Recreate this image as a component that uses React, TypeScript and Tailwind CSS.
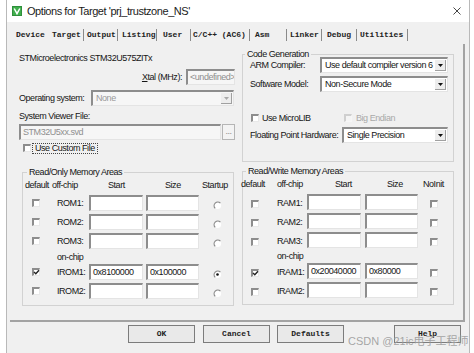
import React from 'react';

const ui = "font-['Liberation_Sans',sans-serif] text-[9px] tracking-[-0.45px] leading-none text-[#151515]";
const mono = "font-['Liberation_Mono','DejaVu_Sans_Mono',monospace] font-bold text-[8px] tracking-normal leading-none text-[#222]";
const sunken = 'border-t-2 border-l-2 border-r border-b border-t-[#8d8d8d] border-l-[#8d8d8d] border-r-[#e4e4e4] border-b-[#e4e4e4]';

const CheckBox = ({ checked = false, disabled = false }: { checked?: boolean; disabled?: boolean }) => (
  <span
    className={`relative block w-[8px] h-[8px] shrink-0 border-t-2 border-l-2 border-r border-b ${
      disabled
        ? 'bg-[#f4f4f4] border-t-[#cfcfcf] border-l-[#cfcfcf] border-r-[#f6f6f6] border-b-[#f6f6f6]'
        : 'bg-white border-t-[#8d8d8d] border-l-[#8d8d8d] border-r-[#e8e8e8] border-b-[#e8e8e8]'
    }`}
  >
    {checked && (
      <svg width="7" height="6" viewBox="0 0 7 6" className="absolute left-[-1px] top-[-1px]">
        <path d="M1 3 L2.8 4.8 L6 1.2" stroke="#222" strokeWidth="1.4" fill="none" />
      </svg>
    )}
  </span>
);

const Radio = ({ on = false }: { on?: boolean }) => (
  <svg width="9" height="9" viewBox="0 0 9 9" className="block">
    <circle cx="4.5" cy="4.5" r="3.6" fill="#fff" />
    <path d="M7.4 2.2 A3.6 3.6 0 0 0 2.2 7.4" stroke="#8a8a8a" strokeWidth="1.2" fill="none" />
    {on && <circle cx="4.5" cy="4.5" r="1.3" fill="#111" />}
  </svg>
);

const Field = ({ className = '', value = '', disabled = false }: { className?: string; value?: string; disabled?: boolean }) => (
  <div className={`h-[16px] shrink-0 flex items-center pl-[2px] whitespace-nowrap overflow-hidden ${sunken} ${disabled ? 'bg-[#f6f6f6] text-[#8f8f8f]' : 'bg-white'} ${className}`}>
    {value}
  </div>
);

const Select = ({ className = '', value, disabled = false }: { className?: string; value: string; disabled?: boolean }) => (
  <div className={`h-[16px] shrink-0 flex items-center ${sunken} ${disabled ? 'bg-[#f6f6f6] text-[#9a9a9a]' : 'bg-white'} ${className}`}>
    <span className="flex-1 pl-[3px] whitespace-nowrap overflow-hidden">{value}</span>
    <span className="w-[11px] h-[11px] mr-[1px] flex items-center justify-center bg-[#ededed] border-r border-b border-[#a0a0a0]">
      <svg width="5" height="3" viewBox="0 0 5 3">
        <path d="M0 0H5L2.5 3Z" fill={disabled ? '#a8a8a8' : '#111'} />
      </svg>
    </span>
  </div>
);

const Btn = ({ className = '', children }: { className?: string; children: React.ReactNode }) => (
  <div className={`w-[67px] h-[18px] flex items-center justify-center border border-[#7c7c7c] bg-[#e9e9e9] ${mono} ${className}`}>
    {children}
  </div>
);

const tabs = [
  { name: 'Device', cls: 'w-[39px] pl-[6px]' },
  { name: 'Target', cls: 'w-[35px] pl-[3px] border-r border-[#8a8a8a] -mt-[1px]' },
  { name: 'Output', cls: 'w-[34px] pl-[3px] border-r border-[#8a8a8a]' },
  { name: 'Listing', cls: 'w-[39px] pl-[4px] border-r border-[#8a8a8a]' },
  { name: 'User', cls: 'w-[34px] pl-[6px] border-r border-[#8a8a8a]' },
  { name: 'C/C++ (AC6)', cls: 'w-[59px] pl-[2px] border-r border-[#8a8a8a]' },
  { name: 'Asm', cls: 'w-[37px] pl-[5px] border-r border-[#8a8a8a]' },
  { name: 'Linker', cls: 'w-[35px] pl-[3px] border-r border-[#8a8a8a]' },
  { name: 'Debug', cls: 'w-[35px] pl-[5px] border-r border-[#8a8a8a]' },
  { name: 'Utilities', cls: 'w-[51px] pl-[3px] border-r border-[#8a8a8a]' },
];

type Row = { label: string; start?: string; size?: string; checked?: boolean; gap: string };

const romRows: Row[] = [
  { label: 'ROM1:', gap: 'mt-[4px]' },
  { label: 'ROM2:', gap: 'mt-[3px]' },
  { label: 'ROM3:', gap: 'mt-[3px]' },
];
const iromRows: Row[] = [
  { label: 'IROM1:', start: '0x8100000', size: '0x100000', checked: true, gap: 'mt-[1px]' },
  { label: 'IROM2:', gap: 'mt-[3px]' },
];
const ramRows: Row[] = [
  { label: 'RAM1:', gap: 'mt-[4px]' },
  { label: 'RAM2:', gap: 'mt-[3px]' },
  { label: 'RAM3:', gap: 'mt-[3px]' },
];
const iramRows: Row[] = [
  { label: 'IRAM1:', start: '0x20040000', size: '0x80000', checked: true, gap: 'mt-[1px]' },
  { label: 'IRAM2:', gap: 'mt-[3px]' },
];

const RomRow = ({ r }: { r: Row }) => (
  <div className={`h-[16px] flex items-center ${r.gap}`}>
    <div className="w-[34px] pl-[9px]">
      <CheckBox checked={r.checked} />
    </div>
    <span className="w-[32px] whitespace-nowrap">{r.label}</span>
    <Field className="w-[54px]" value={r.start} />
    <Field className="ml-[3px] w-[53px]" value={r.size} />
    <div className="w-[34px] pl-[14px] pt-[4px]">
      <Radio on={r.checked} />
    </div>
  </div>
);

const RamRow = ({ r }: { r: Row }) => (
  <div className={`h-[16px] flex items-center ${r.gap}`}>
    <div className="w-[34px] pl-[8px] pt-[3px]">
      <CheckBox checked={r.checked} />
    </div>
    <span className="w-[30px] pt-[2px] whitespace-nowrap">{r.label}</span>
    <Field className="w-[54px]" value={r.start} />
    <Field className="ml-[4px] w-[53px]" value={r.size} />
    <div className="w-[35px] pl-[12px] pt-[3px]">
      <CheckBox />
    </div>
  </div>
);

export default function App() {
  return (
    <div className={`w-[474px] h-[353px] bg-white overflow-hidden relative ${ui}`}>
      <div className="ml-[6px] w-[464px] h-full flex flex-col border-l border-r border-[#b9b9b9]">
        {/* title bar */}
        <div className="h-[22px] shrink-0 bg-white flex items-center">
          <svg width="10" height="10" viewBox="0 0 10 10" className="ml-[5px]">
            <rect width="10" height="10" fill="#2f8f3b" />
            <rect x="1" y="1" width="8" height="8" fill="#3fae4c" />
            <path d="M2.2 2.5 L5 7.6 L7.8 2.5" stroke="#fff" strokeWidth="1.5" fill="none" />
          </svg>
          <span className="ml-[5px] text-[11px] tracking-[-0.45px] text-[#1b1b1b] whitespace-nowrap">
            Options for Target 'prj_trustzone_NS'
          </span>
          <svg width="8" height="8" viewBox="0 0 8 8" className="ml-auto mr-[8px]">
            <path d="M0.5 0.5 L7.5 7.5 M7.5 0.5 L0.5 7.5" stroke="#333" strokeWidth="0.9" />
          </svg>
        </div>

        <div className="flex-1 bg-[#f0f0f0] flex flex-col">
          {/* tabs */}
          <div className="h-[22px] shrink-0 flex pl-[3px]">
            {tabs.map((t) => (
              <div key={t.name} className={`mt-[7px] h-[12px] flex items-center whitespace-nowrap ${mono} ${t.cls}`}>
                {t.name}
              </div>
            ))}
          </div>

          {/* tab page */}
          <div className="ml-[3px] w-[455px] h-[278px] shrink-0 flex border-r-2 border-b-2 border-[#a3a3a3]">
            {/* left column */}
            <div className="w-[228px] pl-[9px] flex flex-col whitespace-nowrap">
              <div className="mt-[7px] h-[14px] flex items-center">STMicroelectronics STM32U575ZITx</div>
              <div className="mt-[4px] h-[16px] flex items-center justify-end pr-[3px]">
                <span>
                  <span className="underline">X</span>tal (MHz):
                </span>
                <Field className="ml-[4px] w-[49px]" value="<undefined>" disabled />
              </div>
              <div className="mt-[5px] h-[16px] flex items-center">
                <span className="w-[72px]">Operating system:</span>
                <Select className="w-[143px]" value="None" disabled />
              </div>
              <div className="mt-[4px] h-[12px] flex items-center">System Viewer File:</div>
              <div className="mt-[2px] h-[16px] flex items-center">
                <Field className="w-[202px]" value="STM32U5xx.svd" disabled />
                <div className="ml-[1px] w-[13px] h-[16px] flex items-end justify-center pb-[3px] border border-[#b5b5b5] bg-[#f3f3f3] text-[#8a8a8a]">
                  ...
                </div>
              </div>
              <div className="mt-[1px] h-[14px] flex items-center pl-[4px]">
                <CheckBox />
                <span className="ml-[1px] h-[11px] px-[2px] flex items-center border border-dotted border-[#444]">Use Custom File</span>
              </div>

              <fieldset className="mt-[11px] ml-[3px] w-[212px] border border-[#d2d2d2] pb-[6px]">
                <legend className="ml-[4px] px-[2px] h-[12px] leading-[12px]">Read/Only Memory Areas</legend>
                <div className="mt-[1px] h-[12px] flex items-center">
                  <span className="w-[29px] pl-[2px]">default</span>
                  <span className="w-[37px]">off-chip</span>
                  <span className="w-[57px] pl-[19px]">Start</span>
                  <span className="w-[53px] pl-[19px]">Size</span>
                  <span className="pl-[3px]">Startup</span>
                </div>
                {romRows.map((r) => (
                  <RomRow key={r.label} r={r} />
                ))}
                <div className="mt-[2px] h-[12px] flex items-center pl-[34px]">on-chip</div>
                {iromRows.map((r) => (
                  <RomRow key={r.label} r={r} />
                ))}
              </fieldset>
            </div>

            {/* right column */}
            <div className="flex-1 flex flex-col whitespace-nowrap">
              <fieldset className="mt-[4px] ml-[4px] w-[212px] border border-[#d2d2d2] pb-[18px]">
                <legend className="ml-[2px] px-[2px] h-[12px] leading-[12px]">Code Generation</legend>
                <div className="-mt-[3px] h-[16px] flex items-center pl-[7px]">
                  <span className="w-[70px]">ARM Compiler:</span>
                  <Select className="w-[128px]" value="Use default compiler version 6" />
                </div>
                <div className="mt-[3px] h-[16px] flex items-center pl-[7px]">
                  <span className="w-[70px]">Software Model:</span>
                  <Select className="w-[128px]" value="Non-Secure Mode" />
                </div>
                <div className="mt-[19px] h-[14px] flex items-center pl-[8px]">
                  <div className="w-[93px] flex items-center">
                    <CheckBox />
                    <span className="ml-[3px]">Use MicroLIB</span>
                  </div>
                  <CheckBox disabled />
                  <span className="ml-[4px] text-[#a9a9a9]">Big Endian</span>
                </div>
                <div className="mt-[2px] h-[16px] flex items-center pl-[7px]">
                  <span className="w-[92px]">Floating Point Hardware:</span>
                  <Select className="w-[106px]" value="Single Precision" />
                </div>
              </fieldset>

              <fieldset className="mt-[3px] ml-[4px] w-[212px] border border-[#d2d2d2] pb-[6px]">
                <legend className="ml-[3px] px-[2px] h-[12px] leading-[12px]">Read/Write Memory Areas</legend>
                <div className="mt-[1px] h-[12px] flex items-center -ml-[2px]">
                  <span className="w-[36px]">default</span>
                  <span className="w-[30px]">off-chip</span>
                  <span className="w-[58px] pl-[28px]">Start</span>
                  <span className="w-[53px] pl-[22px]">Size</span>
                  <span className="pl-[5px]">NoInit</span>
                </div>
                {ramRows.map((r) => (
                  <RamRow key={r.label} r={r} />
                ))}
                <div className="mt-[2px] h-[12px] flex items-center pl-[34px]">on-chip</div>
                {iramRows.map((r) => (
                  <RamRow key={r.label} r={r} />
                ))}
              </fieldset>
            </div>
          </div>

          {/* buttons */}
          <div className="mt-[3px] h-[18px] flex">
            <Btn className="ml-[121px]">OK</Btn>
            <Btn className="ml-[8px]">Cancel</Btn>
            <Btn className="ml-[7px]">Defaults</Btn>
            <Btn className="ml-[50px]">Help</Btn>
          </div>
        </div>
      </div>

      {/* watermark */}
      <div className="absolute left-[348px] top-[336px] text-[11px] tracking-normal leading-none whitespace-nowrap text-[#9c9c9c]/90 font-['Liberation_Sans','Noto_Sans_CJK_SC',sans-serif]">
        CSDN @21ic电子工程师
      </div>
    </div>
  );
}
